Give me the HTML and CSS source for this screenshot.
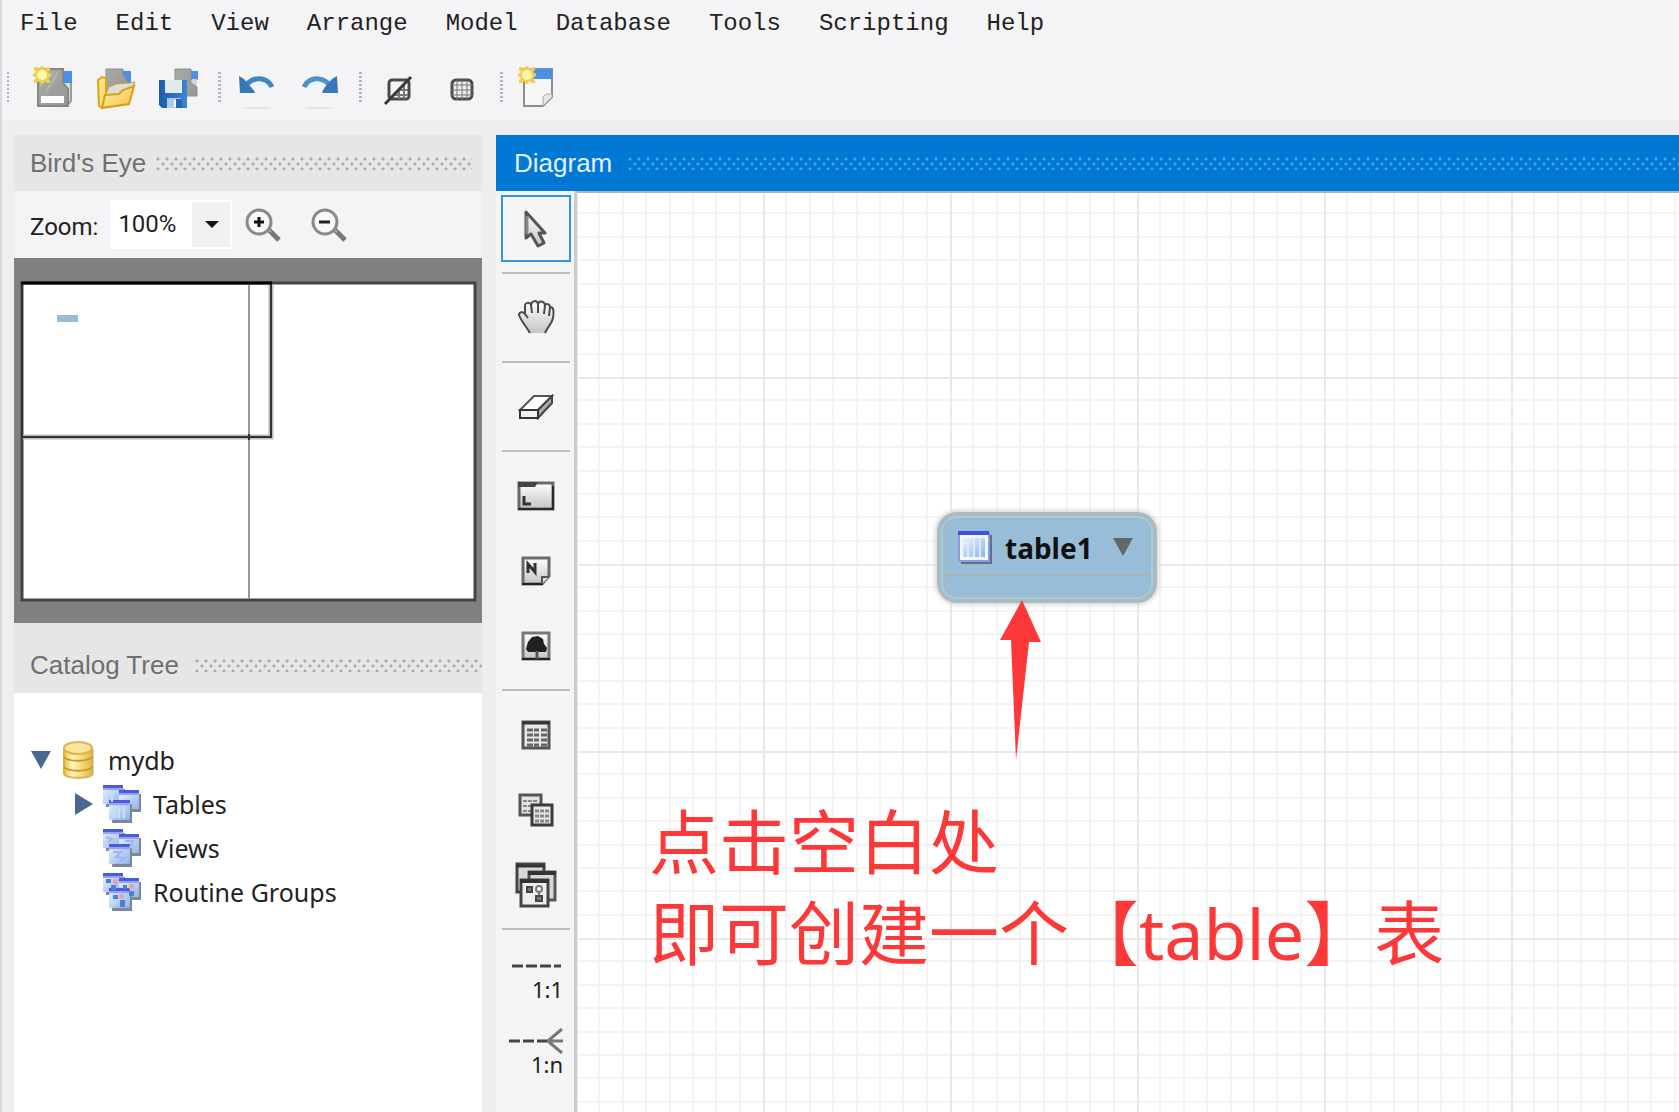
FILE: index.html
```html
<!DOCTYPE html>
<html lang="en">
<head>
    <meta charset="UTF-8">
    <meta name="viewport" content="width=device-width, initial-scale=1.0">
    <title>EER Diagram</title>
    <link rel="stylesheet" href="styles.css">
</head>
<body>
    <!-- shared icon parts -->
    <svg class="defs" width="0" height="0" aria-hidden="true">
        <defs>
            <linearGradient id="gray" x1="0" y1="0" x2="1" y2="1">
                <stop offset="0" stop-color="#a9aca6"/><stop offset="1" stop-color="#959892"/>
            </linearGradient>
            <linearGradient id="paper" x1="0" y1="0" x2="0" y2="1">
                <stop offset="0" stop-color="#fff"/><stop offset="1" stop-color="#c4c4c4"/>
            </linearGradient>
            <linearGradient id="gold" x1="0" y1="0" x2="1" y2="1">
                <stop offset="0" stop-color="#fff3b8"/><stop offset="1" stop-color="#f3bd3c"/>
            </linearGradient>
            <linearGradient id="drum" x1="0" y1="0" x2="1" y2="0">
                <stop offset="0" stop-color="#e9bf3a"/><stop offset=".3" stop-color="#fff6bd"/><stop offset="1" stop-color="#e6b93a"/>
            </linearGradient>
            <linearGradient id="sky" x1="0" y1="0" x2="1" y2="1">
                <stop offset="0" stop-color="#eaf3ff"/><stop offset="1" stop-color="#8fb4ea"/>
            </linearGradient>
            <linearGradient id="blue" x1="0" y1="0" x2="1" y2="0">
                <stop offset="0" stop-color="#1c5da8"/><stop offset="1" stop-color="#3c86cf"/>
            </linearGradient>
            <symbol id="spark" viewBox="0 0 18 18">
                <path d="M1 1h3l2 2 2-3h2l2 3 3-2h2v3l-2 2 3 2v2l-3 2 2 3v2h-3l-3-2-1 3H8l-2-3-2 2H1v-3l2-2-3-2V8l3-2-2-2z" fill="#f0cf55"/>
                <circle cx="9" cy="9" r="5" fill="#fff7a8"/>
            </symbol>
            <symbol id="win" viewBox="0 0 22 22">
                <path d="M3 4h19v18H3z" fill="#7d8798"/>
                <path d="M0 1h20v18H0z" fill="url(#sky)"/>
                <path d="M0 0h20v3H0z" fill="#4a5be0"/>
                <path d="M0 3h20v2H0z" fill="#93a2f3"/>
            </symbol>
            <pattern id="grid" x="-1" y="-3" width="187" height="187" patternUnits="userSpaceOnUse">
                <path d="M23 0v187M47 0v187M70 0v187M94 0v187M117 0v187M140 0v187M164 0v187M0 23h187M0 47h187M0 70h187M0 94h187M0 117h187M0 140h187M0 164h187" stroke="#f4f4f4" stroke-width="2" fill="none"/>
                <path d="M1 0v187M0 1h187" stroke="#e9e9e9" stroke-width="2" fill="none"/>
            </pattern>
        </defs>
    </svg>

    <header class="top">
        <nav class="menu">
            <a href="#">File</a>
            <a href="#">Edit</a>
            <a href="#">View</a>
            <a href="#">Arrange</a>
            <a href="#">Model</a>
            <a href="#">Database</a>
            <a href="#">Tools</a>
            <a href="#">Scripting</a>
            <a href="#">Help</a>
        </nav>
        <div class="toolbar">
            <span class="grip grip-first"></span>
            <div class="group">
                <button type="button" aria-label="New model">
                    <svg width="42" height="44" viewBox="0 0 42 44">
                        <path d="M26 6h13v29l-4 5H26z" fill="#d9dad8" stroke="#9a9c98" stroke-width="2"/>
                        <path d="M30 5h10v12H30z" fill="#4a8fe8"/>
                        <path d="M6 3h25v14l5 6v17H6z" fill="url(#gray)" stroke="#858882" stroke-width="2"/>
                        <path d="M14 26L26 6M8 20l14-14" stroke="#b2b5af" stroke-width="2"/>
                        <path d="M9 30h23v7H9z" fill="#fff"/>
                        <use href="#spark" x="1" y="0" width="18" height="18"/>
                    </svg>
                </button>
                <button type="button" aria-label="Open model">
                    <svg width="42" height="44" viewBox="0 0 42 44">
                        <path d="M27 5h9v12h-9z" fill="#4a8fe8"/>
                        <path d="M11 3h17v6l4 6v14H11z" fill="url(#gray)" stroke="#8b8e88"/>
                        <path d="M3 14l4-3 4 1v16l-4 14-3-2z" fill="#fbe27a" stroke="#d9a520" stroke-width="2"/>
                        <path d="M11 27l3-6 7-3 13-1 6-1-7 15-24 8z" fill="#deded4" stroke="#cf9f22"/>
                        <path d="M7 42l3-13 14-1 4-4 11-4-5 18z" fill="url(#gold)" stroke="#d9a017" stroke-width="2"/>
                    </svg>
                </button>
                <button type="button" aria-label="Save model">
                    <svg width="42" height="44" viewBox="0 0 42 44">
                        <path d="M33 5h7v9h-7z" fill="#4a8fe8"/>
                        <path d="M34 13h5v12h-5z" fill="#d4d5d3"/>
                        <path d="M17 3h16v14l6 4v9H17z" fill="url(#gray)" stroke="#8b8e88"/>
                        <path d="M1 14h28v28H4l-3-3z" fill="url(#blue)"/>
                        <path d="M7 14h17v13H7z" fill="#e2eaec"/>
                        <path d="M9 32h14v10H9z" fill="#a9cbee"/>
                        <path d="M16 34h5v7h-5z" fill="#fff"/>
                        <path d="M18 33h6v9h-6z" fill="#2468b4"/>
                    </svg>
                </button>
            </div>
            <span class="grip"></span>
            <div class="group">
                <button type="button" aria-label="Undo">
                    <svg width="42" height="44" viewBox="0 0 42 44">
                        <path d="M36 21C31 11 19 10 11 18" fill="none" stroke="#3f87c4" stroke-width="5"/>
                        <path d="M3 10l5 3 7 8 4 5-1 1H4z" fill="#3579b8"/>
                        <ellipse cx="21" cy="42" rx="15" ry="1" fill="#e2e2e4"/>
                    </svg>
                </button>
                <button type="button" aria-label="Redo">
                    <svg width="42" height="44" viewBox="0 0 42 44">
                        <path d="M5 21C10 11 22 10 30 18" fill="none" stroke="#4a92cc" stroke-width="5"/>
                        <path d="M38 10l-5 3-7 8-3 5 1 1h15z" fill="#3579b8"/>
                        <ellipse cx="20" cy="42" rx="15" ry="1" fill="#e2e2e4"/>
                    </svg>
                </button>
            </div>
            <span class="grip"></span>
            <div class="group">
                <button type="button" aria-label="Toggle grid">
                    <svg width="42" height="44" viewBox="0 0 42 44">
                        <rect x="12" y="14" width="20" height="19" rx="3" fill="#fff" stroke="#4a4a4a" stroke-width="3"/>
                        <path d="M22 20v13M27 16v17M17 24h14M15 29h16" stroke="#777" stroke-width="2"/>
                        <path d="M14 16h14L14 31z" fill="#f4f4f6"/>
                        <path d="M8 38L34 11" stroke="#3a3a3a" stroke-width="3"/>
                    </svg>
                </button>
                <button type="button" aria-label="Align to grid">
                    <svg width="42" height="44" viewBox="0 0 42 44">
                        <rect x="12" y="14" width="20" height="19" rx="4" fill="#eee" stroke="#4a4a4a" stroke-width="3"/>
                        <path d="M17 13v21M22 13v21M27 13v21M11 19h22M11 24h22M11 29h22" stroke="#777" stroke-width="1"/>
                    </svg>
                </button>
            </div>
            <span class="grip"></span>
            <div class="group">
                <button type="button" aria-label="New diagram">
                    <svg width="42" height="44" viewBox="3 0 42 44">
                        <path d="M9 3h28v28l-9 9H9z" fill="#f6f6f6" stroke="#8d8f8b" stroke-width="2"/>
                        <path d="M28 40v-9l3-3h6v3z" fill="#e6e6e6" stroke="#aaa"/>
                        <path d="M10 3h27v10H10z" fill="#4a8fe8"/>
                        <use href="#spark" x="3" y="0" width="18" height="18"/>
                    </svg>
                </button>
            </div>
        </div>
    </header>

    <main class="main">
        <aside class="sidebar">
            <section>
                <h2 class="panel-title">Bird's Eye <span class="dots"></span></h2>
                <div class="zoom-bar">
                    <label for="zoom">Zoom:</label>
                    <span class="combo">
                        <select id="zoom">
                            <option>100%</option>
                            <option>150%</option>
                            <option>200%</option>
                        </select>
                    </span>
                    <button type="button" aria-label="Zoom in">
                        <svg width="36" height="34" viewBox="0 0 36 34">
                            <path d="M23 21l11 11" stroke="#777" stroke-width="5"/>
                            <path d="M22 20l4 4" stroke="#c9a878" stroke-width="2"/>
                            <circle cx="14" cy="14" r="12" fill="#f8f8f8" stroke="#8a8a8a" stroke-width="3"/>
                            <path d="M14 9v10M9 14h10" stroke="#111" stroke-width="3"/>
                        </svg>
                    </button>
                    <button type="button" aria-label="Zoom out">
                        <svg width="36" height="34" viewBox="0 0 36 34">
                            <path d="M23 21l11 11" stroke="#777" stroke-width="5"/>
                            <path d="M22 20l4 4" stroke="#c9a878" stroke-width="2"/>
                            <circle cx="14" cy="14" r="12" fill="#f8f8f8" stroke="#8a8a8a" stroke-width="3"/>
                            <path d="M8 14h11" stroke="#222" stroke-width="3"/>
                        </svg>
                    </button>
                </div>
                <svg class="minimap" viewBox="0 0 468 365">
                    <rect width="468" height="365" fill="#808080"/>
                    <rect x="8" y="25" width="453" height="317" fill="#fff" stroke="#444" stroke-width="3"/>
                    <path d="M235 27v314" stroke="#999" stroke-width="2"/>
                    <path d="M9 179h248V27" fill="none" stroke="#bbb" stroke-width="5"/>
                    <path d="M8 25h249v154H8z" fill="none" stroke="#333" stroke-width="2"/>
                    <path d="M235 176v6" stroke="#333" stroke-width="2"/>
                    <path d="M7 25h251" stroke="#000" stroke-width="3"/>
                    <path d="M43 57h21v7H43z" fill="#98bdd8"/>
                </svg>
            </section>
            <section class="catalog">
                <h2 class="panel-title tall">Catalog Tree <span class="dots wide"></span></h2>
                <ul class="tree">
                    <li>
                        <div class="node">
                            <svg class="arrow" width="20" height="20" viewBox="0 0 20 20"><path d="M0 1h20L10 19z" fill="#4a678f"/></svg>
                            <svg width="32" height="38" viewBox="0 0 32 38">
                                <path d="M4 8v26c4 5 23 5 27 0V8z" fill="#d5d5d5"/>
                                <path d="M1 7v26c2 5 26 5 28 0V7z" fill="url(#drum)" stroke="#d8b045" stroke-width="2"/>
                                <path d="M1 16c4 5 24 5 28 0M1 26c4 5 24 5 28 0" fill="none" stroke="#c9991f" stroke-width="2"/>
                                <ellipse cx="15" cy="7" rx="14" ry="6" fill="#fbe59a" stroke="#dcb850" stroke-width="2"/>
                            </svg>
                            <span>mydb</span>
                        </div>
                        <ul>
                            <li class="node">
                                <svg class="arrow" width="20" height="22" viewBox="0 0 20 22"><path d="M1 0l18 11L1 22z" fill="#4a678f"/></svg>
                                <svg width="38" height="38" viewBox="0 0 38 38">
                                    <use href="#win" x="0" y="0" width="22" height="22"/>
                                    <use href="#win" x="16" y="5" width="22" height="22"/>
                                    <use href="#win" x="6" y="15" width="23" height="23"/>
                                    <path d="M11 21v12M16 21v12M21 21v12M4 6v11M9 6v11" stroke="#c9ddfb" stroke-width="2"/>
                                </svg>
                                <span>Tables</span>
                            </li>
                            <li class="node">
                                <span class="arrow"></span>
                                <svg width="38" height="38" viewBox="0 0 38 38">
                                    <use href="#win" x="0" y="0" width="22" height="22"/>
                                    <use href="#win" x="16" y="5" width="22" height="22"/>
                                    <use href="#win" x="6" y="15" width="23" height="23"/>
                                    <path d="M3 8l6 2-4 3M22 12h8l-3 6M10 23h8l-5 5 8 1-4 4" fill="none" stroke="#a9adf5" stroke-width="2"/>
                                </svg>
                                <span>Views</span>
                            </li>
                            <li class="node">
                                <span class="arrow"></span>
                                <svg width="38" height="38" viewBox="0 0 38 38">
                                    <use href="#win" x="0" y="0" width="22" height="22"/>
                                    <use href="#win" x="16" y="5" width="22" height="22"/>
                                    <use href="#win" x="6" y="15" width="23" height="23"/>
                                    <path d="M3 6h5v4H3zM8 12h5v5H8zM20 12h4v4h-4zM26 18h5v5h-5zM10 22h5v4h-5zM17 27h5v7h-5z" fill="#4f7fd0"/>
                                    <path d="M10 6h5v5h-5zM26 11h5v5h-5zM16 21h5v5h-5z" fill="#e3a6b4"/>
                                </svg>
                                <span>Routine Groups</span>
                            </li>
                        </ul>
                    </li>
                </ul>
            </section>
        </aside>

        <section class="diagram">
            <h2 class="panel-title active">Diagram <span class="dots"></span></h2>
            <div class="work">
                <div class="tools">
                    <button type="button" class="tool selected" aria-label="Select">
                        <svg width="26" height="38" viewBox="0 0 26 38">
                            <path d="M3 2v26l5-4 7 12 6-3-5-10h6z" fill="url(#paper)" stroke="#555" stroke-width="3" stroke-linejoin="round"/>
                            <path d="M4 6v18" stroke="#888" stroke-width="3"/>
                        </svg>
                    </button>
                    <hr>
                    <button type="button" class="tool" aria-label="Hand">
                        <svg width="38" height="38" viewBox="0 0 38 38">
                            <path d="M12 34C9 27 4 22 2 16c0-3 4-4 6-1V7c0-4 5-4 6-1 1-5 6-5 7-1 1-4 6-3 7 1 1-2 5-1 5 2 4 0 4 5 3 11-1 6-5 8-7 15z" fill="url(#paper)"/>
                            <path d="M13 34C9 27 4 22 2 16c0-3 4-4 6-1l3 4M8 15V7c0-4 5-4 6-1l1 8M14 6c1-5 6-5 7-1v9M21 5c1-4 6-3 7 1l-1 9M28 6c1-2 5-1 5 2l-1 9M33 8c4 0 4 5 3 11-1 6-5 8-8 15" fill="none" stroke="#4a4a4a" stroke-width="2"/>
                        </svg>
                    </button>
                    <hr>
                    <button type="button" class="tool" aria-label="Eraser">
                        <svg width="36" height="26" viewBox="0 0 36 26">
                            <path d="M2 16L16 2h18L20 16z" fill="#fff" stroke="#555" stroke-width="2"/>
                            <path d="M34 2v7L20 24v-8z" fill="#aaa" stroke="#444" stroke-width="2"/>
                            <path d="M2 16h18v8H2z" fill="#f0f0f0" stroke="#333" stroke-width="2"/>
                        </svg>
                    </button>
                    <hr>
                    <button type="button" class="tool" aria-label="Layer">
                        <svg width="38" height="30" viewBox="0 0 38 30">
                            <rect x="2" y="2" width="34" height="26" fill="url(#paper)" stroke="#6a6a6a" stroke-width="3"/>
                            <path d="M1 1h20l-3 5H1z" fill="#444"/>
                            <path d="M1 28h36M36 5v23" stroke="#2a2a2a" stroke-width="2"/>
                            <path d="M7 15v8h7" fill="none" stroke="#333" stroke-width="3"/>
                        </svg>
                    </button>
                    <button type="button" class="tool" aria-label="Note">
                        <svg width="30" height="30" viewBox="0 0 30 30">
                            <path d="M2 2h26v18l-7 8H2z" fill="url(#paper)" stroke="#6a6a6a" stroke-width="3"/>
                            <path d="M1 28h21" stroke="#222" stroke-width="2"/>
                            <path d="M21 28v-7h7" fill="#ddd" stroke="#555" stroke-width="2"/>
                            <path d="M7 17V8l7 8V7" fill="none" stroke="#333" stroke-width="3"/>
                        </svg>
                    </button>
                    <button type="button" class="tool" aria-label="Image">
                        <svg width="30" height="30" viewBox="0 0 30 30">
                            <rect x="2" y="2" width="26" height="26" fill="url(#paper)" stroke="#777" stroke-width="3"/>
                            <path d="M1 28h28" stroke="#222" stroke-width="2"/>
                            <path d="M11 6l6-1 5 3 1 5 3 4-1 4H7l-2-3 2-7z" fill="#222"/>
                            <path d="M16 20v8" stroke="#555" stroke-width="3"/>
                        </svg>
                    </button>
                    <hr>
                    <button type="button" class="tool" aria-label="Table">
                        <svg width="30" height="30" viewBox="0 0 30 30">
                            <rect x="2" y="2" width="26" height="26" fill="#e8e8e8" stroke="#555" stroke-width="3"/>
                            <path d="M1 3h28" stroke="#333" stroke-width="3"/>
                            <path d="M6 10h6M13 10h5M20 10h6M6 15h6M13 15h5M20 15h6M6 20h6M13 20h5M20 20h6M6 25h6M13 25h5M20 25h6" stroke="#666" stroke-width="3"/>
                        </svg>
                    </button>
                    <button type="button" class="tool" aria-label="View">
                        <svg width="36" height="34" viewBox="0 0 36 34">
                            <rect x="2" y="2" width="21" height="20" fill="#e4e4e4" stroke="#555" stroke-width="3"/>
                            <path d="M5 8h15M5 13h9M5 18h9" stroke="#888" stroke-width="2" stroke-dasharray="4 1"/>
                            <rect x="14" y="12" width="20" height="20" fill="#e8e8e8" stroke="#3a3a3a" stroke-width="3"/>
                            <path d="M17 18h14M17 23h14M17 28h14" stroke="#888" stroke-width="3" stroke-dasharray="4 1"/>
                        </svg>
                    </button>
                    <button type="button" class="tool" aria-label="Routine group">
                        <svg width="42" height="46" viewBox="0 0 42 46">
                            <rect x="2" y="2" width="27" height="28" fill="#d8d8d8" stroke="#444" stroke-width="3"/>
                            <path d="M1 4h29" stroke="#333" stroke-width="3"/>
                            <rect x="14" y="10" width="26" height="28" fill="#d8d8d8" stroke="#555" stroke-width="3"/>
                            <path d="M13 11h28" stroke="#333" stroke-width="4"/>
                            <rect x="6" y="18" width="27" height="26" fill="#eee" stroke="#444" stroke-width="3"/>
                            <path d="M5 19h29" stroke="#333" stroke-width="4"/>
                            <rect x="12" y="25" width="5" height="5" fill="#777" stroke="#444" stroke-width="2"/>
                            <circle cx="24" cy="27" r="3" fill="#fff" stroke="#777" stroke-width="2"/>
                            <path d="M24 30v4" stroke="#777" stroke-width="2"/>
                            <rect x="21" y="34" width="6" height="5" fill="#777" stroke="#444" stroke-width="2"/>
                        </svg>
                    </button>
                    <hr>
                    <button type="button" class="tool relation">
                        <svg width="54" height="26" viewBox="0 0 54 26"><path d="M3 13h49" stroke="#444" stroke-width="3" stroke-dasharray="11 3"/></svg>
                        1:1
                    </button>
                    <button type="button" class="tool relation">
                        <svg width="54" height="26" viewBox="0 0 54 26">
                            <path d="M0 13h40" stroke="#444" stroke-width="3" stroke-dasharray="11 3"/>
                            <path d="M38 13h16M40 12L53 1M40 14l13 11" fill="none" stroke="#777" stroke-width="3"/>
                        </svg>
                        1:n
                    </button>
                </div>
                <div class="canvas">
                    <svg class="grid" width="100%" height="100%"><rect width="100%" height="100%" fill="url(#grid)"/></svg>
                    <div class="entity">
                        <div class="entity-head">
                            <svg width="36" height="36" viewBox="0 0 36 36">
                                <path d="M4 5h31v29H4z" fill="#5d6f8c"/>
                                <path d="M2 3h30v28H2z" fill="#f2f6ff" stroke="#8a9cd8" stroke-width="2"/>
                                <path d="M6 8h22v19H6z" fill="url(#sky)"/>
                                <path d="M11 8v19M17 8v19M23 8v19" stroke="#dde9fb" stroke-width="2"/>
                                <path d="M1 1h31v4H1z" fill="#4450dd"/>
                            </svg>
                            <span>table1</span>
                            <svg width="20" height="20" viewBox="0 0 20 20"><path d="M0 0h20L10 18z" fill="#666"/></svg>
                        </div>
                    </div>
                    <svg class="pointer" width="42" height="160" viewBox="0 0 42 160"><path d="M22 0l19 42H29L16 160 11 40H0z" fill="#fc3838"/></svg>
                    <p class="note" lang="zh-CN">点击空白处<br>即可创建一个【table】表</p>
                </div>
            </div>
        </section>
    </main>
</body>
</html>
```
FILE: styles.css
```css
* {
    box-sizing: border-box;
}
body {
    margin: 0;
    height: 100vh;
    display: flex;
    flex-direction: column;
    overflow: hidden;
    border-left: 2px solid #d8d8dc;
    background: #eeeef0;
    font-family: "Liberation Sans", Arial, sans-serif;
    color: #222;
}
button {
    display: flex;
    align-items: center;
    justify-content: center;
    padding: 0;
    border: 0;
    background: none;
    color: inherit;
    font: inherit;
}
svg {
    display: block;
    flex: none;
}
.defs {
    position: absolute;
}

/* menu + toolbar */
.top {
    flex: none;
    background: #f4f4f6;
    padding-bottom: 10px;
}
.menu {
    display: flex;
    gap: 38px;
    padding: 8px 18px 0;
}
.menu a {
    color: #222;
    font: 24px/32px "Liberation Mono", "Courier New", monospace;
    text-decoration: none;
}
.toolbar {
    display: flex;
    align-items: center;
    padding-top: 26px;
}
.group {
    display: flex;
    gap: 21px;
}
.grip {
    width: 3px;
    height: 32px;
    margin: 0 15px 0 18px;
    background: repeating-linear-gradient(#a9b8cc 0 2px, transparent 2px 4px);
}
.grip-first {
    width: 2px;
    margin: 0 23px 0 5px;
}

/* side panels */
.main {
    flex: 1;
    min-height: 0;
    display: flex;
    gap: 14px;
    padding: 15px 0 0 12px;
}
.sidebar {
    flex: 0 0 468px;
    display: flex;
    flex-direction: column;
}
.panel-title {
    display: flex;
    align-items: center;
    gap: 10px;
    height: 56px;
    margin: 0;
    padding: 0 10px 0 16px;
    background: #e6e6e6;
    color: #707070;
    font-size: 26px;
    font-weight: normal;
    white-space: nowrap;
}
.panel-title.tall {
    height: 70px;
    padding: 14px 0 0 16px;
    gap: 16px;
}
.panel-title.active {
    padding: 0 0 0 18px;
    gap: 16px;
    background: #0078d4;
    color: #e4f1fb;
}
.dots {
    flex: 1;
    height: 13px;
    background:
        radial-gradient(circle at 2px 2px, #aaa 1px, transparent 2px) 0 0 / 9px 10px,
        radial-gradient(circle at 2px 2px, #aaa 1px, transparent 2px) 5px 5px / 9px 10px;
}
.active .dots {
    background:
        radial-gradient(circle at 2px 2px, #4ca3e4 1px, transparent 2px) 0 0 / 9px 10px,
        radial-gradient(circle at 2px 2px, #4ca3e4 1px, transparent 2px) 5px 5px / 9px 10px;
}
.zoom-bar {
    display: flex;
    align-items: center;
    height: 67px;
    padding-left: 16px;
    background: #f4f4f6;
    font-family: Roboto, sans-serif;
    font-size: 24px;
}
.zoom-bar label {
    padding-top: 4px;
}
.zoom-bar button {
    margin-left: 13px;
}
.zoom-bar button + button {
    margin-left: 30px;
}
.combo {
    position: relative;
    margin-left: 12px;
}
.combo::before {
    content: "";
    position: absolute;
    top: 2px;
    right: 2px;
    width: 38px;
    height: 45px;
    background: #f0f0f0;
}
.combo::after {
    content: "";
    position: absolute;
    top: 21px;
    right: 13px;
    border: 7px solid transparent;
    border-top-color: #111;
    border-bottom: 0;
}
.combo select {
    display: block;
    width: 122px;
    height: 49px;
    padding: 0 0 2px 8px;
    border: 0;
    background: #fff;
    color: #222;
    font: inherit;
    appearance: none;
}
.minimap {
    width: 100%;
}
.catalog {
    flex: 1;
    display: flex;
    flex-direction: column;
}
.tree {
    flex: 1;
    margin: 0;
    padding: 45px 0 0 17px;
    background: #fff;
    color: #222;
    font-family: "Noto Sans", sans-serif;
    font-size: 25px;
    list-style: none;
}
.tree ul {
    margin: 0;
    padding: 0 0 0 43px;
    list-style: none;
}
.node {
    display: flex;
    align-items: center;
    gap: 12px;
    height: 44px;
}
.node span {
    line-height: 32px;
    padding-bottom: 1px;
}
.arrow {
    width: 20px;
}
.tree ul .arrow {
    margin-right: -3px;
}
.tree > li > .node span {
    margin-left: 1px;
}

/* diagram area */
.diagram {
    flex: 1;
    min-width: 0;
    display: flex;
    flex-direction: column;
}
.work {
    flex: 1;
    min-height: 0;
    display: flex;
}
.tools {
    flex: 0 0 81px;
    padding: 4px 3px 0 5px;
    border-right: 3px solid #ccc;
    background: #f4f4f6;
}
.tools hr {
    height: 2px;
    margin: 6px 1px;
    border: 0;
    background: #bdbdbd;
}
.tool {
    width: 70px;
    height: 75px;
}
.tool.selected {
    height: 67px;
    margin-bottom: 10px;
    border: 2px solid #3a93de;
}
.relation {
    flex-direction: column;
    align-items: flex-end;
    justify-content: flex-start;
    padding: 17px 8px 0 0;
    font: 22px/20px "Noto Sans", sans-serif;
}
.canvas {
    flex: 1;
    position: relative;
    overflow: hidden;
    border-top: 2px solid #aab4be;
    background: #fff;
}
.grid {
    position: absolute;
    inset: 0;
}
.entity {
    position: absolute;
    left: 364px;
    top: 323px;
    width: 212px;
    height: 83px;
    padding: 3px 1px;
    border: 2px solid #8fd3ee;
    border-radius: 16px;
    background: #98bdd8;
    box-shadow: inset 0 0 0 2px #a9b6bf, 0 0 0 4px #b0b8bb, 0 0 4px 6px #d5d8d8;
}
.entity-head {
    display: flex;
    align-items: center;
    height: 55px;
    padding-left: 13px;
    border-bottom: 2px solid #aab0b4;
    color: #111;
    font: bold 28px/36px "Noto Sans", sans-serif;
}
.entity-head span {
    margin: 0 20px 0 12px;
}
.pointer {
    position: absolute;
    left: 423px;
    top: 407px;
}
.note {
    position: absolute;
    left: 72px;
    top: 604px;
    margin: 0;
    color: #fc3838;
    font: 70px/91px "Noto Sans", "Noto Sans CJK SC", sans-serif;
    white-space: nowrap;
}
```
